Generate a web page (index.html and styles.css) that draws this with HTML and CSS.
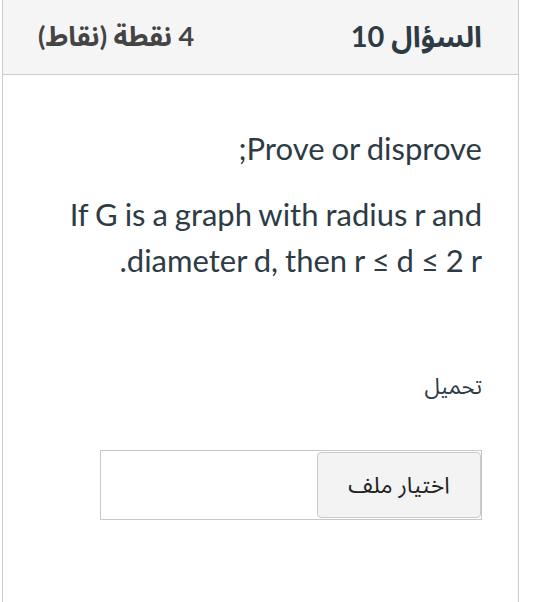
FILE: index.html
```html
<!DOCTYPE html>
<html lang="ar" dir="rtl">
<head>
    <meta charset="utf-8">
    <title>السؤال 10</title>
    <link rel="stylesheet" href="styles.css">
</head>
<body>
    <div class="questionCard">
        <div class="questionHeader">
            <span class="questionName">السؤال 10</span>
            <span class="questionPoints">4 نقطة (نقاط)</span>
        </div>
        <div class="questionBody">
            <p class="questionText">Prove or disprove;</p>
            <p class="questionText">If G is a graph with radius r and diameter d, then r ≤ d ≤ 2 r.</p>

            <div class="uploadLabel">تحميل</div>
            <div class="fileBox">
                <span class="fileButton">اختيار ملف</span>
            </div>
        </div>
    </div>
</body>
</html>
```

FILE: styles.css
```css
body {
    margin: 0;
    background-color: #fff;
    font-family: Lato, "Noto Sans Arabic", "Noto Naskh Arabic", "DejaVu Sans", sans-serif;
    color: #2d3b45;
}

.questionCard {
    width: 517px;
    margin-right: 15px;
    border-left: 1px solid #c7cdd1;
    border-right: 1px solid #c7cdd1;
    min-height: 602px;
    box-sizing: border-box;
}

.questionHeader {
    display: flex;
    justify-content: space-between;
    align-items: center;
    height: 74px;
    padding: 0 36px 0 35px;
    background-color: #f5f5f5;
    border-bottom: 1px solid #c7cdd1;
}

.questionName {
    font-size: 29px;
    font-weight: bold;
    color: #2d3b45;
}

.questionPoints {
    font-size: 27px;
    font-weight: bold;
    color: #444;
}

.questionBody {
    padding: 50px 36px 0 36px;
}

.questionText {
    font-size: 31px;
    line-height: 46px;
    word-spacing: -1px;
    margin: 0 0 20px 0;
}

.uploadLabel {
    font-size: 22px;
    margin-top: 81px;
}

.fileBox {
    display: flex;
    width: 380px;
    height: 68px;
    margin-top: 40px;
    border: 1px solid #c7c7c7;
    align-items: center;
}

.fileButton {
    display: flex;
    align-items: center;
    justify-content: center;
    width: 162px;
    height: 64px;
    background-color: #f3f3f3;
    border: 1px solid #c9c9c9;
    border-radius: 4px;
    font-size: 23px;
    color: #222;
}
```
